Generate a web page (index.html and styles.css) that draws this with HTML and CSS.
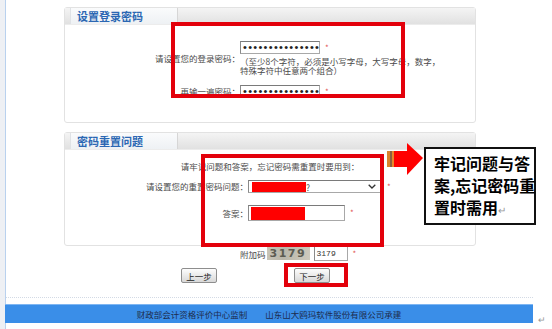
FILE: index.html
```html
<!DOCTYPE html>
<html lang="zh">
<head>
    <meta charset="UTF-8">
    <meta name="viewport" content="width=device-width, initial-scale=1.0">
    <title>设置登录密码</title>
    <link rel="stylesheet" href="styles.css">
</head>
<body>
<div class="stage">
    <div class="main">
        <!-- 登录密码 -->
        <div class="panel">
            <div class="panel-hd"><span class="tab">设置登录密码</span></div>
            <div class="panel-bd bd-pwd">
                <div class="row">
                    <label class="lbl">请设置您的登录密码：</label>
                    <div class="field">
                        <div class="line"><span class="input pwd">•••••••••••••••</span><span class="star">*</span></div>
                        <p class="hint">（至少8个字符，必须是小写字母，大写字母，数字，特殊字符中任意两个组合）</p>
                    </div>
                </div>
                <div class="row row-again">
                    <label class="lbl">再输一遍密码：</label>
                    <div class="line"><span class="input pwd">•••••••••••••••</span><span class="star">*</span></div>
                </div>
            </div>
        </div>

        <!-- 重置问题 -->
        <div class="panel panel-q">
            <div class="panel-hd"><span class="tab">密码重置问题</span></div>
            <div class="panel-bd bd-q">
                <p class="note">请牢记问题和答案，忘记密码需重置时要用到：</p>
                <div class="row row-sel">
                    <label class="lbl">请设置您的重置密码问题：</label>
                    <div class="line">
                        <div class="input select">
                            <span class="sel-text"><span class="redact r-sel"></span>?</span>
                            <svg class="chev" width="8" height="5" viewBox="0 0 8 5"><polyline points="0.7,0.7 4,4 7.3,0.7" fill="none" stroke="#333" stroke-width="1.3"/></svg>
                        </div>
                        <span class="star">*</span>
                    </div>
                </div>
                <div class="row row-ans">
                    <label class="lbl">答案：</label>
                    <div class="line"><div class="input answer"><span class="redact r-ans"></span></div><span class="star">*</span></div>
                </div>
            </div>
        </div>

        <div class="captcha">
            <span>附加码</span>
            <span class="cap-img">3179</span>
            <span class="input cap-input">3179</span>
            <span class="star">*</span>
        </div>

        <div class="btns">
            <button class="btn">上一步</button>
            <button class="btn">下一步</button>
        </div>
    </div>

    <div class="rule"></div>
    <div class="footer">
        <span>财政部会计资格评价中心监制</span>
        <span>山东山大鸥玛软件股份有限公司承建</span>
    </div>

    <!-- 标注 -->
    <div class="mark mark-pwd"></div>
    <div class="mark mark-q"></div>
    <div class="mark mark-next"></div>
    <svg class="arrow" width="38" height="36" viewBox="0 0 38 36">
        <defs>
            <linearGradient id="tail" x1="0" x2="1" y1="0" y2="0">
                <stop offset="0" stop-color="#d9832c"/>
                <stop offset="0.12" stop-color="#d9832c"/>
                <stop offset="0.12" stop-color="#8c6040"/>
                <stop offset="0.22" stop-color="#8c6040"/>
                <stop offset="0.22" stop-color="#e8872a"/>
                <stop offset="0.32" stop-color="#e8872a"/>
                <stop offset="0.32" stop-color="#ff0000"/>
                <stop offset="1" stop-color="#ff0000"/>
            </linearGradient>
        </defs>
        <rect x="1" y="10" width="21" height="16" fill="url(#tail)"/>
        <polygon points="21,2 37,17 21,34" fill="#ff0000"/>
    </svg>
    <div class="callout">牢记问题与答<br>案,忘记密码重<br>置时需用<span class="ret">↵</span></div>
    <span class="corner">↵</span>
</div>
</body>
</html>
```

FILE: styles.css
```css
body, html {
    margin: 0;
    padding: 0;
}

body {
    font-family: "Noto Sans CJK SC", "Liberation Sans", sans-serif;
    font-size: 8.5px;
    color: #4a4a4a;
}

.stage {
    position: relative;
    width: 552px;
    height: 329px;
    overflow: hidden;
    box-sizing: border-box;
    padding-top: 7px;
    background: linear-gradient(to right, #eef0f4 0, #eef0f4 5px, #b9d1ee 5px, #b9d1ee 6px, #fff 6px);
}

.main {
    margin-left: 64px;
    width: 412px;
}

.panel {
    border: 1px solid #e2e2e2;
    border-radius: 3px;
    background: #fff;
}
.panel-q {
    margin-top: 9px;
}

.panel-hd {
    height: 17px;
    box-sizing: border-box;
    padding-left: 5px;
    display: flex;
    background: linear-gradient(#f4f4f4, #e1e1e1);
    border-bottom: 1px solid #ececec;
}
.tab {
    width: 108px;
    box-sizing: border-box;
    padding-left: 6px;
    border-left: 1px solid #dfe2e6;
    border-right: 1px solid #d6d6d6;
    background: linear-gradient(#fafbfc, #eef1f4);
    color: #2b67b3;
    font-weight: bold;
    font-size: 11px;
    line-height: 16px;
}

.bd-pwd {
    padding: 16px 0 24px;
}
.bd-q {
    padding: 11px 0 24px;
}

.row {
    display: flex;
    align-items: center;
}
.lbl {
    flex: none;
    width: 175px;
    text-align: right;
    line-height: 11px;
}
.panel-q .lbl {
    width: 183px;
}
.line {
    display: flex;
    align-items: center;
}

.input {
    box-sizing: border-box;
    height: 13px;
    border: 1px solid #a8a8a8;
    border-top-color: #7a7a7a;
    border-left-color: #8a8a8a;
    background: #fff;
}
.pwd {
    width: 80px;
    padding-left: 2px;
    overflow: hidden;
    white-space: nowrap;
    font-family: "Liberation Sans", sans-serif;
    font-size: 11px;
    line-height: 10px;
    letter-spacing: 1.3px;
    color: #222;
}
.star {
    margin-left: 5px;
    color: #e25555;
    font-size: 8px;
    line-height: 8px;
}
.hint {
    margin: 3px 0 0;
    width: 204px;
    line-height: 9px;
}
.row-again {
    margin-top: 10px;
}

.note {
    margin: 0;
    text-align: center;
    line-height: 11px;
}
.row-sel {
    margin-top: 8px;
}
.select {
    width: 134px;
    padding: 0 5px 0 3px;
    display: flex;
    align-items: center;
    justify-content: space-between;
}
.sel-text {
    display: flex;
    align-items: center;
    color: #555;
    line-height: 10px;
}
.redact {
    display: inline-block;
    background: #ff0000;
}
.r-sel {
    width: 54px;
    height: 10px;
}
.row-ans {
    margin-top: 12px;
}
.answer {
    width: 97px;
    height: 16px;
    padding: 1px 2px;
}
.r-ans {
    width: 54px;
    height: 13px;
}

.captcha {
    display: flex;
    align-items: center;
    height: 15px;
    padding-left: 176px;
}
.cap-img {
    width: 43px;
    height: 13px;
    margin-left: 1px;
    box-sizing: border-box;
    padding-left: 3px;
    background: linear-gradient(100deg, #c9c5b7, #b9b6aa 40%, #cfcbbe);
    color: #5c5c52;
    font-family: "DejaVu Sans", sans-serif;
    font-weight: bold;
    font-size: 11px;
    line-height: 13px;
    letter-spacing: 1.5px;
}
.cap-input {
    width: 34px;
    height: 15px;
    margin-left: 4px;
    padding-left: 2px;
    font-family: "Liberation Mono", monospace;
    font-size: 8px;
    line-height: 13px;
    color: #333;
}

.btns {
    display: flex;
    gap: 77px;
    margin-top: 7px;
    padding-left: 117px;
}
.btn {
    width: 36px;
    height: 15px;
    box-sizing: border-box;
    padding: 0;
    border: 1px solid #8e8e8e;
    border-radius: 2px;
    background: linear-gradient(#fdfdfd, #d8d8d8);
    font-family: "Noto Sans CJK SC", sans-serif;
    font-size: 8.5px;
    color: #222;
    display: flex;
    align-items: center;
    justify-content: center;
}

.rule {
    margin: 14px 0 0 6px;
    width: 527px;
    border-top: 1px dotted #d3dae5;
}
.footer {
    margin: 6px 0 0 5px;
    width: 528px;
    height: 19px;
    display: flex;
    justify-content: center;
    align-items: center;
    gap: 18px;
    background: #3a8ee8;
    border-top: 1px solid #7fb6f2;
    box-sizing: border-box;
    color: #1d2c4c;
}

/* 标注 */
.mark {
    position: absolute;
    box-sizing: border-box;
    border: 4px solid #e3000b;
}
.mark-pwd {
    left: 171px;
    top: 22px;
    width: 234px;
    height: 76px;
}
.mark-q {
    left: 201px;
    top: 154px;
    width: 183px;
    height: 93px;
}
.mark-next {
    left: 284px;
    top: 263px;
    width: 64px;
    height: 24px;
}
.arrow {
    position: absolute;
    left: 386px;
    top: 141px;
}
.callout {
    position: absolute;
    left: 424px;
    top: 147px;
    width: 112px;
    height: 78px;
    box-sizing: border-box;
    border: 2px solid #111;
    background: #fff;
    padding: 3px 0 0 8px;
    white-space: nowrap;
    font-family: "Noto Sans CJK SC", sans-serif;
    font-weight: bold;
    font-size: 16px;
    line-height: 22px;
    color: #000;
}
.ret {
    font-weight: normal;
    font-size: 10px;
    color: #999;
}
.corner {
    position: absolute;
    left: 538px;
    top: 313px;
    font-size: 9px;
    color: #999;
}
```
